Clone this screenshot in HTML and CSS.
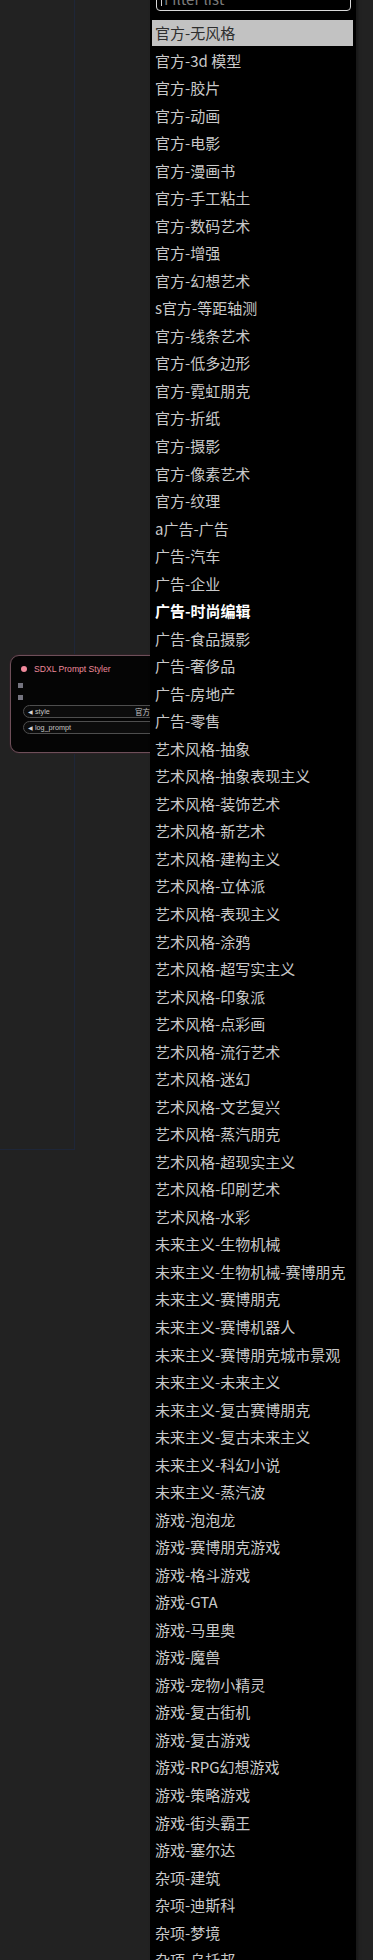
FILE: index.html
```html
<!DOCTYPE html>
<html>
<head>
<meta charset="utf-8">
<link rel="stylesheet" href="styles.css">
</head>
<body>
<div class="canvas">
  <div class="group"></div>

  <div class="node">
    <div class="node-title">
      <span class="node-dot"></span>
      <span class="node-name">SDXL Prompt Styler</span>
    </div>
    <div class="slots">
      <span class="slot"></span>
      <span class="slot"></span>
    </div>
    <div class="widgets">
      <div class="widget"><span class="arrow">&#9664;</span><span class="w-label">style</span><span class="w-value">官方-无风格</span></div>
      <div class="widget"><span class="arrow">&#9664;</span><span class="w-label">log_prompt</span><span class="w-value">No</span></div>
    </div>
  </div>

  <div class="menu">
    <div class="filter"><span class="caret"></span><span class="placeholder">Filter list</span></div>
    <div class="entries">
      <div class="entry selected">官方-无风格</div>
      <div class="entry">官方-3d 模型</div>
      <div class="entry">官方-胶片</div>
      <div class="entry">官方-动画</div>
      <div class="entry">官方-电影</div>
      <div class="entry">官方-漫画书</div>
      <div class="entry">官方-手工粘土</div>
      <div class="entry">官方-数码艺术</div>
      <div class="entry">官方-增强</div>
      <div class="entry">官方-幻想艺术</div>
      <div class="entry">s官方-等距轴测</div>
      <div class="entry">官方-线条艺术</div>
      <div class="entry">官方-低多边形</div>
      <div class="entry">官方-霓虹朋克</div>
      <div class="entry">官方-折纸</div>
      <div class="entry">官方-摄影</div>
      <div class="entry">官方-像素艺术</div>
      <div class="entry">官方-纹理</div>
      <div class="entry">a广告-广告</div>
      <div class="entry">广告-汽车</div>
      <div class="entry">广告-企业</div>
      <div class="entry hover">广告-时尚编辑</div>
      <div class="entry">广告-食品摄影</div>
      <div class="entry">广告-奢侈品</div>
      <div class="entry">广告-房地产</div>
      <div class="entry">广告-零售</div>
      <div class="entry">艺术风格-抽象</div>
      <div class="entry">艺术风格-抽象表现主义</div>
      <div class="entry">艺术风格-装饰艺术</div>
      <div class="entry">艺术风格-新艺术</div>
      <div class="entry">艺术风格-建构主义</div>
      <div class="entry">艺术风格-立体派</div>
      <div class="entry">艺术风格-表现主义</div>
      <div class="entry">艺术风格-涂鸦</div>
      <div class="entry">艺术风格-超写实主义</div>
      <div class="entry">艺术风格-印象派</div>
      <div class="entry">艺术风格-点彩画</div>
      <div class="entry">艺术风格-流行艺术</div>
      <div class="entry">艺术风格-迷幻</div>
      <div class="entry">艺术风格-文艺复兴</div>
      <div class="entry">艺术风格-蒸汽朋克</div>
      <div class="entry">艺术风格-超现实主义</div>
      <div class="entry">艺术风格-印刷艺术</div>
      <div class="entry">艺术风格-水彩</div>
      <div class="entry">未来主义-生物机械</div>
      <div class="entry">未来主义-生物机械-赛博朋克</div>
      <div class="entry">未来主义-赛博朋克</div>
      <div class="entry">未来主义-赛博机器人</div>
      <div class="entry">未来主义-赛博朋克城市景观</div>
      <div class="entry">未来主义-未来主义</div>
      <div class="entry">未来主义-复古赛博朋克</div>
      <div class="entry">未来主义-复古未来主义</div>
      <div class="entry">未来主义-科幻小说</div>
      <div class="entry">未来主义-蒸汽波</div>
      <div class="entry">游戏-泡泡龙</div>
      <div class="entry">游戏-赛博朋克游戏</div>
      <div class="entry">游戏-格斗游戏</div>
      <div class="entry">游戏-GTA</div>
      <div class="entry">游戏-马里奥</div>
      <div class="entry">游戏-魔兽</div>
      <div class="entry">游戏-宠物小精灵</div>
      <div class="entry">游戏-复古街机</div>
      <div class="entry">游戏-复古游戏</div>
      <div class="entry">游戏-RPG幻想游戏</div>
      <div class="entry">游戏-策略游戏</div>
      <div class="entry">游戏-街头霸王</div>
      <div class="entry">游戏-塞尔达</div>
      <div class="entry">杂项-建筑</div>
      <div class="entry">杂项-迪斯科</div>
      <div class="entry">杂项-梦境</div>
      <div class="entry">杂项-乌托邦</div>
    </div>
  </div>
</div>
</body>
</html>
```

FILE: styles.css
```css
html, body {
  margin: 0;
  padding: 0;
  height: 1960px;
  overflow: hidden;
  background: #222222;
}

.canvas {
  position: relative;
  width: 373px;
  height: 1960px;
  overflow: hidden;
  background: #222222;
  font-family: "Noto Sans CJK SC", "Noto Sans", sans-serif;
}

.group {
  position: absolute;
  left: -1px;
  top: -1px;
  width: 75px;
  height: 1150px;
  border-right: 1px solid #1e2638;
  border-bottom: 1px solid #1e2638;
}

/* ---------- node ---------- */
.node {
  position: absolute;
  left: 10px;
  top: 655px;
  width: 200px;
  height: 96px;
  background: #050505;
  border: 1px solid #6e4f59;
  border-radius: 9px;
  box-shadow: 0 0 0 1px #2c2226;
  font-family: "Liberation Sans", Arial, sans-serif;
}

.node-title {
  display: flex;
  align-items: center;
  gap: 7px;
  height: 26px;
  padding-left: 10px;
}

.node-dot {
  width: 6px;
  height: 6px;
  border-radius: 50%;
  background: #f08a9c;
}

.node-name {
  color: #ee8a9b;
  font-size: 8.6px;
}

.slots {
  display: flex;
  flex-direction: column;
  gap: 7px;
  padding-left: 7px;
  margin-top: 1px;
}

.slot {
  width: 5px;
  height: 5px;
  background: #74737e;
}

.widgets {
  display: flex;
  flex-direction: column;
  gap: 3px;
  margin-top: 5px;
  padding-left: 12px;
}

.widget {
  display: flex;
  align-items: center;
  height: 11px;
  width: 161px;
  border: 1px solid #4e4e4e;
  border-radius: 7px;
  background: #0c0c0c;
  padding-left: 4px;
  font-size: 7.2px;
  color: #c4c4c4;
}

.arrow {
  font-size: 6px;
  color: #d6d6d6;
  margin-right: 2px;
}

.w-label {
  flex: 1;
}

.w-value {
  padding-right: 14px;
  font-size: 7.5px;
  font-family: "Noto Sans CJK SC", sans-serif;
}

/* ---------- menu ---------- */
.menu {
  position: absolute;
  left: 150px;
  top: -16px;
  width: 206px;
  height: 2000px;
  background: #000000;
  box-shadow: 2px 0 3px rgba(0, 0, 0, 0.35);
}

.filter {
  display: flex;
  align-items: center;
  box-sizing: border-box;
  height: 25px;
  margin: 2px 5px 0 6px;
  border: 1px solid #d8d8d8;
  border-radius: 4px;
  padding-left: 4px;
  font-size: 15px;
  color: #7a7a7a;
}

.caret {
  width: 1px;
  height: 15px;
  background: #cfcfcf;
  margin-right: 2px;
}

.entries {
  padding-top: 7px;
}

.entry {
  margin: 2px 3px 0 2px;
  height: 25.54px;
  line-height: 25.54px;
  padding-left: 3px;
  font-size: 15px;
  color: #c9c9c9;
  white-space: nowrap;
  overflow: hidden;
}

.entry.selected {
  background: #c2c2c2;
  color: #2e2e2e;
}

.entry.hover {
  color: #ffffff;
  font-weight: bold;
}
```
